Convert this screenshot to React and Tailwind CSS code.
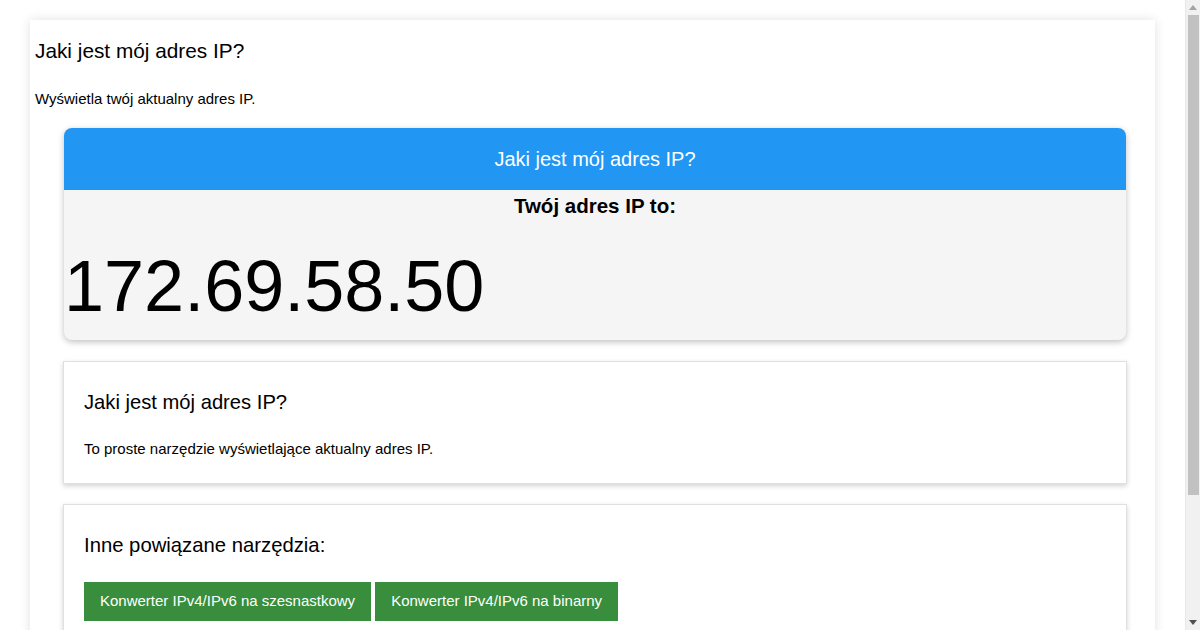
import React from 'react';

const font = { fontFamily: '"Liberation Sans", Arial, sans-serif' };

function Scrollbar() {
  return (
    <div className="fixed top-0 right-0 h-screen w-[15px] bg-[#f1f1f1] border-l border-[#e8e8e8] flex flex-col items-center">
      <div className="h-[15px] flex items-center justify-center">
        <svg width="8" height="5" viewBox="0 0 8 5"><path d="M4 0L8 5H0Z" fill="#a3a3a3" /></svg>
      </div>
      <div className="w-[11px] h-[480px] bg-[#c1c1c1]" />
      <div className="flex-1" />
      <div className="h-[15px] flex items-center justify-center">
        <svg width="8" height="5" viewBox="0 0 8 5"><path d="M0 0H8L4 5Z" fill="#505050" /></svg>
      </div>
    </div>
  );
}

export default function App() {
  return (
    <div className="bg-white min-h-screen pt-[20px] pb-[40px] pr-[15px] text-black" style={font}>
      <div className="mx-[30px] bg-white shadow-[0_0_10px_rgba(0,0,0,0.12)] pb-[30px]">
        <h1 className="pl-[5px] pt-[19px] text-[20.8px] leading-[24px] font-normal">
          Jaki jest mój adres IP?
        </h1>
        <p className="pl-[5px] mt-[25px] text-[15px] leading-[22.5px]">
          Wyświetla twój aktualny adres IP.
        </p>

        <div className="ml-[34px] mr-[29px] mt-[17px] rounded-lg bg-[#f5f5f5] shadow-[0_2px_6px_rgba(0,0,0,0.25)] overflow-hidden">
          <div className="h-[62px] bg-[#2196f3] flex items-center justify-center text-white text-[20px]">
            Jaki jest mój adres IP?
          </div>
          <div className="pt-[4px] text-center text-[20.5px] leading-[24px] font-bold">
            Twój adres IP to:
          </div>
          <div className="mt-[27px] pb-[12px] text-[72px] leading-[83px]">
            172.69.58.50
          </div>
        </div>

        <div className="ml-[33px] mr-[28px] mt-[21px] border border-[#e0e0e0] bg-white shadow-[0_2px_5px_rgba(0,0,0,0.18)] px-[20px] pt-[28px] pb-[23px]">
          <h3 className="text-[20.2px] leading-[24px] font-normal">Jaki jest mój adres IP?</h3>
          <p className="mt-[24px] text-[15px] leading-[22.5px]">
            To proste narzędzie wyświetlające aktualny adres IP.
          </p>
        </div>

        <div className="ml-[33px] mr-[28px] mt-[20px] border border-[#e0e0e0] bg-white shadow-[0_2px_5px_rgba(0,0,0,0.18)] px-[20px] pt-[28px] pb-[24px]">
          <h3 className="text-[20.3px] leading-[24px] font-normal">Inne powiązane narzędzia:</h3>
          <div className="mt-[25px] flex flex-wrap gap-1">
            <a className="bg-[#388e3c] text-white text-[15px] px-[16px] h-[39px] flex items-center">
              Konwerter IPv4/IPv6 na szesnastkowy
            </a>
            <a className="bg-[#388e3c] text-white text-[15px] px-[16px] h-[39px] flex items-center">
              Konwerter IPv4/IPv6 na binarny
            </a>
          </div>
        </div>
      </div>
      <Scrollbar />
    </div>
  );
}
